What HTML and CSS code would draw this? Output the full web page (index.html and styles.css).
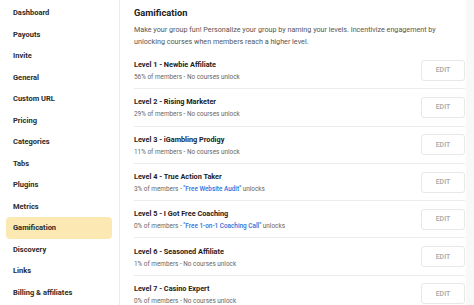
FILE: index.html
```html
<!DOCTYPE html>
<html lang="en">
<head>
    <meta charset="UTF-8">
    <title>Settings - Gamification</title>
    <link rel="stylesheet" href="styles.css">
</head>
<body>
    <div class="layout">
        <!-- Menu lateral -->
        <nav class="sidebar">
            <a class="nav-item">Dashboard</a>
            <a class="nav-item">Payouts</a>
            <a class="nav-item">Invite</a>
            <a class="nav-item">General</a>
            <a class="nav-item">Custom URL</a>
            <a class="nav-item">Pricing</a>
            <a class="nav-item">Categories</a>
            <a class="nav-item">Tabs</a>
            <a class="nav-item">Plugins</a>
            <a class="nav-item">Metrics</a>
            <a class="nav-item active">Gamification</a>
            <a class="nav-item">Discovery</a>
            <a class="nav-item">Links</a>
            <a class="nav-item">Billing &amp; affiliates</a>
        </nav>

        <!-- Contenido -->
        <main class="content">
            <h2>Gamification</h2>
            <p class="intro">Make your group fun! Personalize your group by naming your levels. Incentivize engagement by unlocking courses when members reach a higher level.</p>

            <div class="levels">
                <div class="level">
                    <div class="level-info">
                        <div class="level-name">Level 1 - Newbie Affiliate</div>
                        <div class="level-meta">56% of members - No courses unlock</div>
                    </div>
                    <button class="edit-btn">EDIT</button>
                </div>
                <div class="level">
                    <div class="level-info">
                        <div class="level-name">Level 2 - Rising Marketer</div>
                        <div class="level-meta">29% of members - No courses unlock</div>
                    </div>
                    <button class="edit-btn">EDIT</button>
                </div>
                <div class="level">
                    <div class="level-info">
                        <div class="level-name">Level 3 - iGambling Prodigy</div>
                        <div class="level-meta">11% of members - No courses unlock</div>
                    </div>
                    <button class="edit-btn">EDIT</button>
                </div>
                <div class="level">
                    <div class="level-info">
                        <div class="level-name">Level 4 - True Action Taker</div>
                        <div class="level-meta">3% of members - <a class="course">"Free Website Audit"</a> unlocks</div>
                    </div>
                    <button class="edit-btn">EDIT</button>
                </div>
                <div class="level">
                    <div class="level-info">
                        <div class="level-name">Level 5 - I Got Free Coaching</div>
                        <div class="level-meta">0% of members - <a class="course">"Free 1-on-1 Coaching Call"</a> unlocks</div>
                    </div>
                    <button class="edit-btn">EDIT</button>
                </div>
                <div class="level">
                    <div class="level-info">
                        <div class="level-name">Level 6 - Seasoned Affiliate</div>
                        <div class="level-meta">1% of members - No courses unlock</div>
                    </div>
                    <button class="edit-btn">EDIT</button>
                </div>
                <div class="level">
                    <div class="level-info">
                        <div class="level-name">Level 7 - Casino Expert</div>
                        <div class="level-meta">0% of members - No courses unlock</div>
                    </div>
                    <button class="edit-btn">EDIT</button>
                </div>
            </div>
        </main>
    </div>
</body>
</html>
```

FILE: styles.css
```css
body {
    font-family: Roboto, 'Liberation Sans', sans-serif;
    background-color: #f8f8f8;
    margin: 0;
    color: #202124;
}

.layout {
    display: flex;
    width: 466px;
    height: 305px;
    overflow: hidden;
    background: #ffffff;
}

/* Menu lateral */
.sidebar {
    width: 120px;
    flex-shrink: 0;
    padding: 2px 7px 0 6px;
    box-sizing: border-box;
    border-right: 1px solid #ececec;
    display: flex;
    flex-direction: column;
}

.nav-item {
    display: block;
    height: 21.5px;
    line-height: 21.5px;
    padding-left: 7px;
    font-size: 7.5px;
    font-weight: 700;
    color: #2b2b2b;
    border-radius: 4px;
}

.nav-item.active {
    background-color: #fce8b2;
}

/* Contenido */
.content {
    flex: 1;
    padding: 6px 1px 0 14px;
}

h2 {
    margin: 0;
    font-size: 9.3px;
    font-weight: 700;
    line-height: 14px;
}

.intro {
    margin: 4px 0 4px;
    font-size: 7.2px;
    line-height: 12px;
    color: #555;
}

.level {
    display: flex;
    align-items: center;
    justify-content: space-between;
    height: 37.3px;
    border-bottom: 1px solid #ececec;
    box-sizing: border-box;
}

.level-name {
    font-size: 7.3px;
    font-weight: 700;
    line-height: 12px;
}

.level-meta {
    margin-top: 2px;
    font-size: 6.4px;
    color: #666;
}

.course {
    color: #2f6fdb;
    font-weight: 500;
}

.edit-btn {
    width: 44px;
    height: 21px;
    border: 1px solid #e8e8e8;
    border-radius: 3px;
    background: #ffffff;
    color: #a8a8a8;
    font-family: inherit;
    font-size: 7px;
    font-weight: 500;
    padding: 0;
}
```
